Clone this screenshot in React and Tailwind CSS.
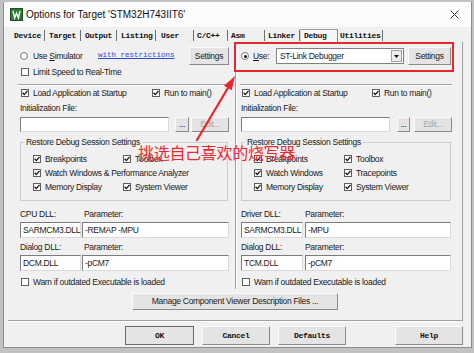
import React from 'react';

const sans = "font-['Liberation_Sans',Arial,sans-serif] text-[8.5px] tracking-[-0.3px] text-[#1a1a1a]";
const mono = "font-['Liberation_Mono','Courier_New',monospace] font-bold text-[8px] tracking-[-0.3px] text-[#111]";

const tabs = [
  ['Device', 35, 'pl-[4px]'],
  ['Target', 36, 'pl-[4px]'],
  ['Output', 36, 'pl-[4px]'],
  ['Listing', 39, 'pl-[4px]'],
  ['User', 38, 'pl-[5px]'],
  ['C/C++', 34, 'pl-[3px]'],
  ['Asm', 37, 'pl-[3px]'],
  ['Linker', 35, 'pl-[3px]'],
  ['Debug', 38, 'pl-[3px]'],
  ['Utilities', 45, 'pl-[2px]'],
];

function Check({ on = true }) {
  return (
    <span className="w-[8px] h-[8px] shrink-0 border border-[#5e5e5e] bg-white flex items-center justify-center">
      {on && (
        <svg width="6" height="6" viewBox="0 0 6 6">
          <path d="M0.6 2.8 L2.3 4.6 L5.5 0.9" fill="none" stroke="#111" strokeWidth="1.3" />
        </svg>
      )}
    </span>
  );
}

function CB({ label, className = '', on = true }) {
  return (
    <div className={`flex items-center gap-[4px] ${className}`}>
      <Check on={on} />
      <span className="whitespace-nowrap">{label}</span>
    </div>
  );
}

function Radio({ on }) {
  return (
    <span className="w-[8px] h-[8px] shrink-0 rounded-full border border-[#7a7a7a] bg-white flex items-center justify-center">
      {on && <span className="w-[3px] h-[3px] rounded-full bg-[#111]" />}
    </span>
  );
}

function Btn({ children, className = '', disabled }) {
  return (
    <div
      className={`flex items-center justify-center whitespace-nowrap bg-[#e4e4e4] border border-t-[#fbfbfb] border-l-[#fbfbfb] border-r-[#8a8a8a] border-b-[#8a8a8a] ${disabled ? 'text-[#a8a8a8]' : ''} ${className}`}
    >
      {children}
    </div>
  );
}

function Field({ children, className = '' }) {
  return (
    <div className={`bg-white border border-t-[#7c7c7c] border-l-[#7c7c7c] border-r-[#dadada] border-b-[#dadada] flex items-center pl-[2px] whitespace-nowrap ${className}`}>
      {children}
    </div>
  );
}

function Group({ width, items }) {
  return (
    <fieldset className={`mt-[3px] border border-[#cdcdcd] ${width}`}>
      <legend className="ml-[3px] px-[2px] h-[14px] leading-[14px]">Restore Debug Session Settings</legend>
      <div className="pl-[12px] pt-[3px] pb-[6px]">
        {items.map(([a, b]) => (
          <div key={a} className="h-[14px] flex items-center">
            <CB label={a} className="w-[90px]" />
            {b && <CB label={b} />}
          </div>
        ))}
      </div>
    </fieldset>
  );
}

function Dlls({ first, dll1, par1, dll2, par2, w1, gap, w2 }) {
  return (
    <>
      <div className="mt-[6px] h-[14px] flex items-center">
        <span className="w-[64px]">{first}</span>
        <span>Parameter:</span>
      </div>
      <div className={`mt-[1px] h-[16px] flex ${gap}`}>
        <Field className={w1}>{dll1}</Field>
        <Field className={w2}>{par1}</Field>
      </div>
      <div className="mt-[2px] h-[14px] flex items-center">
        <span className="w-[64px]">Dialog DLL:</span>
        <span>Parameter:</span>
      </div>
      <div className={`mt-[1px] h-[16px] flex ${gap}`}>
        <Field className={w1}>{dll2}</Field>
        <Field className={w2}>{par2}</Field>
      </div>
      <div className="mt-[4px] h-[14px] flex items-center pl-[1px]">
        <CB label="Warn if outdated Executable is loaded" on={false} />
      </div>
    </>
  );
}

export default function App() {
  return (
    <div className={`relative w-[474px] h-[353px] overflow-hidden bg-[#c2c2c2] pt-[2px] pl-[3px] pr-[2px] ${sans}`}>
      <div className="w-[469px] h-[346px] bg-[#f0f0f0] border-x border-b border-[#8c8c8c] flex flex-col">
        {/* title bar */}
        <div className="h-[25px] shrink-0 bg-[#fcfcfc] flex items-center pl-[6px] pr-[12px]">
          <svg width="13" height="13" viewBox="0 0 13 13">
            <rect x="0.5" y="0.5" width="12" height="12" fill="#2f7a35" stroke="#1d4f22" />
            <path d="M3 3 L4.6 10 L6.5 5 L8.4 10 L10 3" fill="none" stroke="#fff" strokeWidth="1.3" />
          </svg>
          <span className="ml-[3px] text-[10px] tracking-normal text-[#111]">Options for Target 'STM32H743IIT6'</span>
          <svg className="ml-auto" width="9" height="9" viewBox="0 0 9 9">
            <path d="M0.5 0.5 L8.5 8.5 M8.5 0.5 L0.5 8.5" stroke="#333" strokeWidth="1" />
          </svg>
        </div>

        {/* tabs */}
        <div className={`h-[15px] shrink-0 flex items-end pl-[6px] ${mono}`}>
          {tabs.map(([t, w, pl]) =>
            t === 'Debug' ? (
              <div
                key={t}
                style={{ width: w }}
                className="h-[13px] leading-[11px] pl-[3px] bg-[#f7f7f7] border border-b-0 border-t-[#9a9a9a] border-l-[#cfcfcf] border-r-[#8a8a8a]"
              >
                {t}
              </div>
            ) : (
              <div key={t} style={{ width: w }} className={`h-[11px] mb-[1px] leading-[11px] border-r border-[#6f6f6f] ${pl}`}>
                {t}
              </div>
            )
          )}
        </div>

        {/* panel */}
        <div className="relative ml-[4px] mr-[8px] h-[279px] shrink-0 border-r border-b border-[#a0a0a0] flex flex-col">
          <div className="flex">
            {/* left column */}
            <div className="w-[227px] pl-[12px] pr-[6px]">
              <div className="mt-[5px] h-[18px] flex items-center">
                <div className="w-[78px] flex items-center gap-[5px]">
                  <Radio />
                  <span>Use <span className="underline">S</span>imulator</span>
                </div>
                <span className="font-['Liberation_Mono','Courier_New',monospace] text-[7.5px] tracking-normal text-[#2a4bd7] underline">with restrictions</span>
                <Btn className="ml-auto w-[40px] h-[18px]">Settings</Btn>
              </div>
              <div className="h-[14px] flex items-center pl-[1px]">
                <CB label="Limit Speed to Real-Time" on={false} />
              </div>
              <div className="mt-[5px] -ml-[2px] mr-[1px] h-[2px] border-t border-[#a0a0a0] border-b border-b-white" />
              <div className="h-[14px] flex items-center pl-[1px]">
                <CB label="Load Application at Startup" className="w-[131px]" />
                <CB label="Run to main()" />
              </div>
              <div className="h-[16px] flex items-center">Initialization File:</div>
              <div className="mt-[1px] h-[15px] flex">
                <Field className="w-[149px] h-[15px]" />
                <Btn className="ml-[6px] w-[14px] h-[15px]">...</Btn>
                <Btn className="ml-[2px] w-[38px] h-[15px]" disabled>Edit...</Btn>
              </div>
              <Group
                width="w-[208px]"
                items={[
                  ['Breakpoints', 'Toolbox'],
                  ['Watch Windows & Performance Analyzer'],
                  ['Memory Display', 'System Viewer'],
                ]}
              />
              <Dlls
                first="CPU DLL:"
                dll1="SARMCM3.DLL"
                par1="-REMAP -MPU"
                dll2="DCM.DLL"
                par2="-pCM7"
                w1="w-[61px]"
                gap="gap-[1px]"
                w2="w-[147px]"
              />
            </div>

            <div className="w-[2px] border-l border-[#a0a0a0] border-r border-r-white" />

            {/* right column */}
            <div className="flex-1 pl-[4px] pr-[10px]">
              <div className="mt-[5px] h-[18px] flex items-center">
                <Radio on />
                <span className="ml-[4px] w-[23px]"><span className="underline">U</span>se:</span>
                <div className="w-[128px] h-[16px] bg-white border border-[#828282] flex items-center pl-[3px] pr-[1px]">
                  <span>ST-Link Debugger</span>
                  <div className="ml-auto w-[11px] h-[12px] bg-[#ececec] border border-[#a0a0a0] flex items-center justify-center">
                    <svg width="5" height="3" viewBox="0 0 5 3">
                      <path d="M0 0 L5 0 L2.5 3 Z" fill="#111" />
                    </svg>
                  </div>
                </div>
                <Btn className="ml-auto mr-[1px] w-[43px] h-[18px]">Settings</Btn>
              </div>
              <div className="h-[14px]" />
              <div className="mt-[5px] -ml-[1px] h-[2px] border-t border-[#a0a0a0] border-b border-b-white" />
              <div className="h-[14px] flex items-center pl-[1px]">
                <CB label="Load Application at Startup" className="w-[130px]" />
                <CB label="Run to main()" />
              </div>
              <div className="h-[16px] flex items-center">Initialization File:</div>
              <div className="mt-[1px] h-[15px] flex">
                <Field className="w-[149px] h-[15px]" />
                <Btn className="ml-[7px] w-[13px] h-[15px]">...</Btn>
                <Btn className="ml-[4px] w-[38px] h-[15px]" disabled>Edit...</Btn>
              </div>
              <Group
                width="w-[210px]"
                items={[
                  ['Breakpoints', 'Toolbox'],
                  ['Watch Windows', 'Tracepoints'],
                  ['Memory Display', 'System Viewer'],
                ]}
              />
              <Dlls
                first="Driver DLL:"
                dll1="SARMCM3.DLL"
                par1="-MPU"
                dll2="TCM.DLL"
                par2="-pCM7"
                w1="w-[62px]"
                gap="gap-[2px]"
                w2="w-[146px]"
              />
            </div>
          </div>

          <Btn className="mt-[4px] self-center w-[206px] h-[17px]">Manage Component Viewer Description Files ...</Btn>

          {/* red highlight around the Use row */}
          <div className="absolute left-[226px] top-0 w-[220px] h-[30px] border-2 border-[#e8262b]" />
        </div>
        <div className="h-px ml-[4px] mr-[8px] bg-white" />

        {/* dialog buttons */}
        <div className={`mt-[4px] h-[19px] flex gap-[8px] pl-[121px] pr-[8px] ${mono}`}>
          <Btn className="w-[69px] h-[19px] !border-[#6a6a6a]">OK</Btn>
          <Btn className="w-[68px] h-[19px]">Cancel</Btn>
          <Btn className="w-[68px] h-[19px]">Defaults</Btn>
          <Btn className="ml-auto w-[68px] h-[19px]">Help</Btn>
        </div>
      </div>

      {/* annotation arrow */}
      <svg className="absolute left-0 top-0 pointer-events-none" width="474" height="353" viewBox="0 0 474 353">
        <line x1="197" y1="140" x2="228.5" y2="87" stroke="#e8262b" strokeWidth="2.2" strokeLinecap="round" />
        <polygon points="235,76 231.7,90.3 224,85.7" fill="#e8262b" />
      </svg>
      <span className="absolute left-[138px] top-[144px] font-['Noto_Sans_CJK_SC','Noto_Sans',sans-serif] text-[16px] leading-[16px] tracking-[-0.3px] text-[#ea2a2e] whitespace-nowrap">
        挑选自己喜欢的烧写器
      </span>
    </div>
  );
}
